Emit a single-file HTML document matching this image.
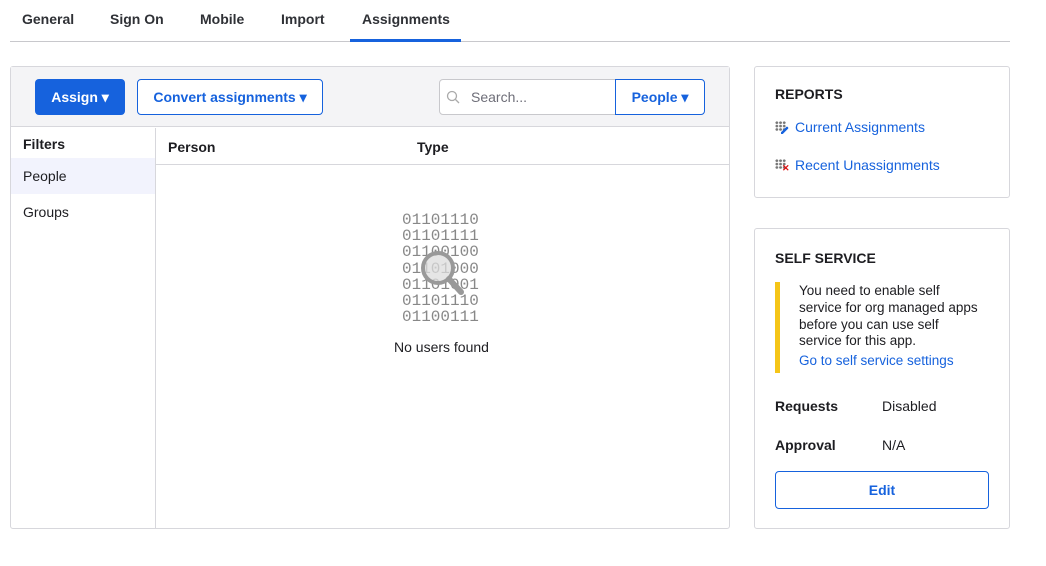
<!DOCTYPE html>
<html><head><style>
*{box-sizing:border-box;margin:0;padding:0}
body{width:1046px;height:566px;background:#fff;font-family:"Liberation Sans",sans-serif;color:#1d1d21;font-size:14px;position:relative;overflow:hidden}
.a{position:absolute}
.tab{position:absolute;top:11px;font-size:14px;font-weight:bold;color:#2f3136}
.link{color:#1662dd}
.btn{position:absolute;border-radius:4px;font-weight:bold;font-size:14px;display:flex;align-items:center;justify-content:center}
.grid{position:absolute;width:11px;height:10px;background:radial-gradient(circle,#777 1.3px,transparent 1.5px) 0 0/3.7px 3.4px}
</style></head><body>
<div class="tab" style="left:22px">General</div>
<div class="tab" style="left:110px">Sign On</div>
<div class="tab" style="left:200px">Mobile</div>
<div class="tab" style="left:281px">Import</div>
<div class="tab" style="left:362px">Assignments</div>
<div class="a" style="left:10px;top:41px;width:1000px;height:1px;background:#c8c8cc"></div>
<div class="a" style="left:350px;top:39px;width:111px;height:3px;background:#1662dd"></div>

<div class="a" style="left:10px;top:66px;width:720px;height:463px;border:1px solid #d7d7dc;border-radius:3px"></div>
<div class="a" style="left:11px;top:67px;width:718px;height:60px;background:#f4f4f6;border-bottom:1px solid #d7d7dc"></div>
<div class="btn" style="left:35px;top:79px;width:90px;height:36px;background:#1662dd;color:#fff">Assign ▾</div>
<div class="btn" style="left:137px;top:79px;width:186px;height:36px;border:1px solid #1662dd;background:#fff;color:#1662dd">Convert assignments ▾</div>
<div class="a" style="left:439px;top:79px;width:178px;height:36px;border:1px solid #c8c8cc;border-radius:4px 0 0 4px;background:#fff"></div>
<svg class="a" style="left:446px;top:90px" width="14" height="14" viewBox="0 0 14 14"><circle cx="6" cy="6" r="4.5" fill="none" stroke="#aaa" stroke-width="1.3"/><path d="M9.5 9.5L13 13" stroke="#aaa" stroke-width="1.3"/></svg>
<div class="a" style="left:471px;top:89px;color:#6e6e78">Search...</div>
<div class="btn" style="left:615px;top:79px;width:90px;height:36px;border:1px solid #1662dd;background:#fff;color:#1662dd;border-radius:0 4px 4px 0">People ▾</div>

<div class="a" style="left:155px;top:128px;width:1px;height:400px;background:#d7d7dc"></div>
<div class="a" style="left:23px;top:136px;font-weight:bold">Filters</div>
<div class="a" style="left:11px;top:158px;width:144px;height:36px;background:#f2f3fd"></div>
<div class="a" style="left:23px;top:168px">People</div>
<div class="a" style="left:23px;top:204px">Groups</div>
<div class="a" style="left:168px;top:139px;font-weight:bold">Person</div>
<div class="a" style="left:417px;top:139px;font-weight:bold">Type</div>
<div class="a" style="left:156px;top:164px;width:573px;height:1px;background:#d7d7dc"></div>
<div class="a" style="left:402px;top:212px;font-family:'Liberation Mono',monospace;font-size:16px;line-height:16.2px;color:#888">01101110<br>01101111<br>01100100<br>01101000<br>01101001<br>01101110<br>01100111</div>
<svg class="a" style="left:416px;top:247px" width="52" height="50" viewBox="0 0 52 50"><circle cx="22" cy="21" r="15" fill="rgba(220,220,220,.75)" stroke="#999" stroke-width="4"/><path d="M33 32L45 45" stroke="#999" stroke-width="6" stroke-linecap="round"/></svg>
<div class="a" style="left:394px;top:339px">No users found</div>

<div class="a" style="left:754px;top:66px;width:256px;height:132px;border:1px solid #d7d7dc;border-radius:3px"></div>
<div class="a" style="left:775px;top:86px;font-weight:bold">REPORTS</div>
<div class="grid" style="left:775px;top:121px"></div>
<svg class="a" style="left:781px;top:126px" width="8" height="8" viewBox="0 0 8 8"><path d="M1 7L6 2" stroke="#1662dd" stroke-width="2.5" stroke-linecap="round"/></svg>
<div class="a" style="left:795px;top:119px" ><span class="link">Current Assignments</span></div>
<div class="grid" style="left:775px;top:159px"></div>
<div class="a" style="left:782px;top:163px;color:#d11;font-size:9px;font-weight:bold">✕</div>
<div class="a" style="left:795px;top:157px"><span class="link">Recent Unassignments</span></div>

<div class="a" style="left:754px;top:228px;width:256px;height:301px;border:1px solid #d7d7dc;border-radius:3px"></div>
<div class="a" style="left:775px;top:250px;font-weight:bold">SELF SERVICE</div>
<div class="a" style="left:775px;top:282px;width:5px;height:91px;background:#f5c518"></div>
<div class="a" style="left:799px;top:283px;font-size:13.5px;line-height:16.8px;white-space:nowrap">You need to enable self<br>service for org managed apps<br>before you can use self<br>service for this app.<br><span class="link" style="line-height:22px">Go to self service settings</span></div>
<div class="a" style="left:775px;top:398px;font-weight:bold">Requests</div>
<div class="a" style="left:882px;top:398px">Disabled</div>
<div class="a" style="left:775px;top:437px;font-weight:bold">Approval</div>
<div class="a" style="left:882px;top:437px">N/A</div>
<div class="btn" style="left:775px;top:471px;width:214px;height:38px;border:1px solid #1662dd;color:#1662dd">Edit</div>
</body></html>
